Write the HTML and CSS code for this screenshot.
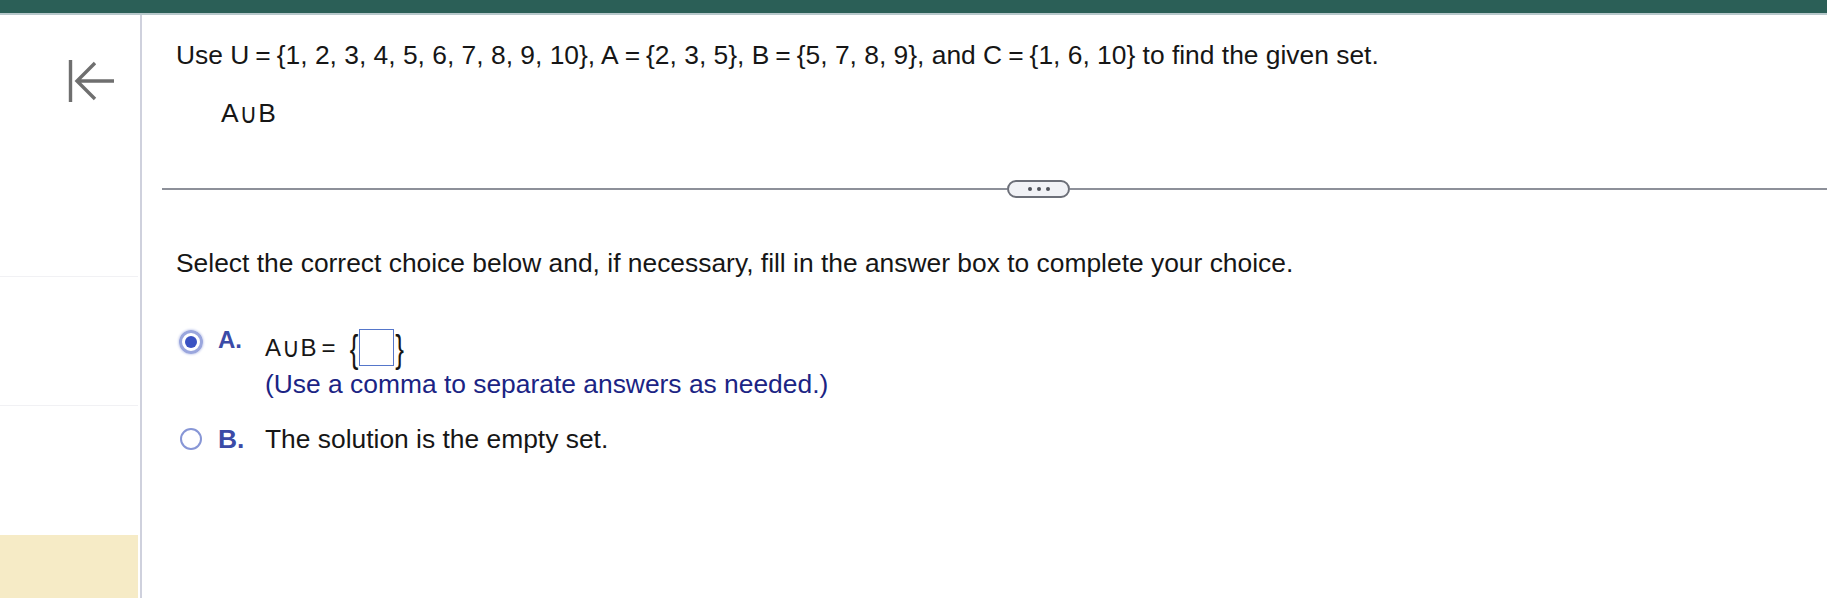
FILE: index.html
```html
<!DOCTYPE html>
<html>
<head>
<meta charset="utf-8">
<link rel="stylesheet" href="styles.css">
</head>
<body>
<div class="topbar"></div>
<div class="frame">
  <aside class="sidebar">
    <svg class="back-icon" width="46" height="42" viewBox="0 0 46 42">
      <path d="M2.5 0 V42 M9 21 H46 M27 3 L9 21 L27 39" fill="none" stroke="#6f6f6f" stroke-width="3.4"/>
    </svg>
    <div class="side-rule first"></div>
    <div class="side-rule second"></div>
    <div class="side-note"></div>
  </aside>
  <main class="content">
    <p class="question">Use U<span class="eq">=</span>{1, 2, 3, 4, 5, 6, 7, 8, 9, 10}, A<span class="eq">=</span>{2, 3, 5}, B<span class="eq">=</span>{5, 7, 8, 9}, and C<span class="eq">=</span>{1, 6, 10} to find the given set.</p>
    <p class="given">A<span class="cup">∪</span>B</p>
    <div class="divider">
      <div class="rule left"></div>
      <div class="pill"><span></span><span></span><span></span></div>
      <div class="rule right"></div>
    </div>
    <p class="instruction">Select the correct choice below and, if necessary, fill in the answer box to complete your choice.</p>
    <div class="choice choice-a">
      <span class="radio checked"></span>
      <span class="letter">A.</span>
      <div class="choice-body">
        <div class="answer-line">A<span class="cup">∪</span>B<span class="eq">=</span><span class="brace">{</span><span class="answer-box"></span><span class="brace">}</span></div>
        <div class="hint">(Use a comma to separate answers as needed.)</div>
      </div>
    </div>
    <div class="choice choice-b">
      <span class="radio"></span>
      <span class="letter">B.</span>
      <div class="choice-body">The solution is the empty set.</div>
    </div>
  </main>
</div>
</body>
</html>
```
FILE: styles.css
```css
html, body {
  margin: 0;
  padding: 0;
  background: #ffffff;
}
body {
  width: 1827px;
  height: 598px;
  overflow: hidden;
  font-family: "Liberation Sans", Arial, sans-serif;
  color: #161616;
}
.topbar {
  height: 13px;
  background: #2b5f57;
  border-bottom: 2px solid #b7c8cb;
}
.frame {
  display: flex;
  height: 583px;
}
.sidebar {
  width: 140px;
  flex: none;
  border-right: 2px solid #cfd1dd;
  display: flex;
  flex-direction: column;
}
.back-icon {
  margin: 45px 0 0 68px;
  display: block;
}
.side-rule {
  height: 1px;
  background: #f1f1f4;
  width: 138px;
}
.side-rule.first { margin-top: 174px; }
.side-rule.second { margin-top: 128px; }
.side-note {
  margin-top: 129px;
  flex: 1;
  width: 138px;
  background: #f6ebc6;
}
.content {
  flex: 1;
  padding: 25px 0 0 34px;
  font-size: 26.4px;
  line-height: 30px;
}
.content p { margin: 0; }
.eq { margin: 0 6px; }
.cup {
  display: inline-block;
  font-family: "DejaVu Sans", sans-serif;
  font-size: 24px;
  transform: scale(1.0, 1.15);
  margin: 0 1px;
}
.given {
  margin-top: 28px !important;
  margin-left: 45px !important;
}
.divider {
  display: flex;
  align-items: center;
  margin: 51px 0 0 -14px;
  height: 18px;
}
.rule {
  height: 2px;
  background: #8d9099;
}
.rule.left { width: 845px; }
.rule.right { flex: 1; }
.pill {
  width: 59px;
  height: 14px;
  border: 2px solid #6c6f78;
  border-radius: 9px;
  background: #f1f2f6;
  display: flex;
  align-items: center;
  justify-content: center;
  gap: 5px;
}
.pill span {
  width: 4px;
  height: 4px;
  border-radius: 50%;
  background: #4f525a;
}
.instruction {
  margin-top: 50px !important;
}
.choice {
  display: flex;
  align-items: flex-start;
  margin-left: 3px;
}
.choice-a { margin-top: 48px; }
.choice-b { margin-top: 25px; }
.radio {
  width: 22px;
  height: 22px;
  border-radius: 50%;
  border: 2px solid #8796d6;
  box-sizing: border-box;
  margin-top: 4px;
  margin-left: 1px;
  margin-right: 1px;
  flex: none;
  display: flex;
  align-items: center;
  justify-content: center;
}
.radio.checked {
  width: 24px;
  height: 24px;
  margin: 4px 0 0 0;
  border: 3px solid #9aa6dd;
  box-shadow: 0 0 2px 1px #d5daf2;
}
.radio.checked::after {
  content: "";
  width: 12px;
  height: 12px;
  border-radius: 50%;
  background: #3a52c2;
}
.letter {
  color: #3b4ba7;
  font-weight: bold;
  width: 47px;
  margin-left: 15px;
  flex: none;
}
.choice-a .letter { margin-top: -1px; font-size: 24px; }
.answer-line {
  display: flex;
  align-items: center;
  height: 37px;
  margin-top: 3px;
  font-size: 24px;
}
.answer-line .eq { margin: 0 14px 0 5px; }
.brace {
  font-size: 26px;
  transform: scaleY(1.5);
  margin: 0 1px 0 0;
  line-height: 30px;
}
.brace:last-child { margin: 0 0 0 1px; }
.answer-box {
  width: 33px;
  height: 35px;
  border: 1.5px solid #5576ca;
  flex: none;
}
.hint {
  color: #1b2484;
  margin-top: 3px;
}
```
